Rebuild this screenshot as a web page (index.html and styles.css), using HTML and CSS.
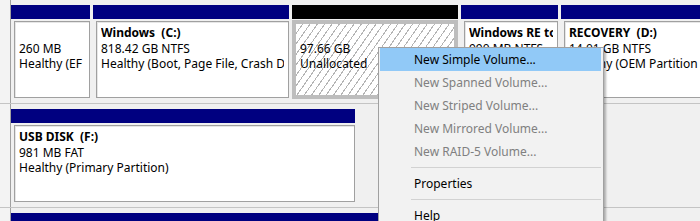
FILE: index.html
```html
<!DOCTYPE html>
<html>
<head>
<meta charset="utf-8">
<link rel="stylesheet" href="styles.css">
</head>
<body>
<div class="view">
  <div class="disk">
    <div class="disk-label"></div>
    <div class="parts">
      <div class="part p-efi">
        <div class="bar"></div>
        <div class="body"><div class="line">&nbsp;</div><div class="line">260 MB</div><div class="line">Healthy (EF</div></div>
      </div>
      <div class="part p-c">
        <div class="bar"></div>
        <div class="body"><div class="line b">Windows  (C:)</div><div class="line">818.42 GB NTFS</div><div class="line">Healthy (Boot, Page File, Crash D</div></div>
      </div>
      <div class="part p-un">
        <div class="bar black"></div>
        <div class="body hatch"><div class="line">&nbsp;</div><div class="line">97.66 GB</div><div class="line">Unallocated</div></div>
      </div>
      <div class="part p-re">
        <div class="bar"></div>
        <div class="body"><div class="line b">Windows RE to</div><div class="line">990 MB NTFS</div><div class="line">&nbsp;</div></div>
      </div>
      <div class="part p-rec">
        <div class="bar"></div>
        <div class="body"><div class="line b">RECOVERY  (D:)</div><div class="line">14.01 GB NTFS</div><div class="line">Healthy (OEM Partition</div></div>
      </div>
    </div>
  </div>
  <div class="disk">
    <div class="disk-label"></div>
    <div class="parts">
      <div class="part p-usb">
        <div class="bar"></div>
        <div class="body"><div class="line b">USB DISK  (F:)</div><div class="line">981 MB FAT</div><div class="line">Healthy (Primary Partition)</div></div>
      </div>
    </div>
  </div>
  <div class="disk last">
    <div class="disk-label"></div>
    <div class="parts">
      <div class="part p-next">
        <div class="bar"></div>
      </div>
    </div>
  </div>
</div>
<div class="menu">
  <div class="item active">New Simple Volume...</div>
  <div class="item dis">New Spanned Volume...</div>
  <div class="item dis">New Striped Volume...</div>
  <div class="item dis">New Mirrored Volume...</div>
  <div class="item dis">New RAID-5 Volume...</div>
  <div class="sep"></div>
  <div class="item">Properties</div>
  <div class="sep"></div>
  <div class="item">Help</div>
</div>
</body>
</html>
```
FILE: styles.css
```css
html, body {
  margin: 0;
  padding: 0;
  background: #f0f0f0;
  overflow: hidden;
}
body {
  font-family: "Segoe UI", "Noto Sans", "Open Sans", sans-serif;
  font-size: 12px;
  color: #000;
  width: 700px;
  height: 221px;
  position: relative;
}
.view {
  display: flex;
  flex-direction: column;
  height: 221px;
  overflow: hidden;
}
.disk {
  display: flex;
  height: 103px;
  border-bottom: 1px solid #c4c4c4;
  flex-shrink: 0;
}
.disk.last {
  height: auto;
  flex: 1;
  min-height: 0;
  border-bottom: none;
}
.disk-label {
  width: 10px;
  border-right: 1px solid #a0a0a0;
  background: #f3f3f3;
  flex-shrink: 0;
}
.parts {
  display: flex;
  gap: 3px;
  padding-top: 5px;
  flex: 1;
  min-width: 0;
  overflow: hidden;
}
.part {
  display: flex;
  flex-direction: column;
  flex-shrink: 0;
}
.p-efi { width: 79px; }
.p-c { width: 196px; }
.p-un { width: 166px; }
.p-re { width: 97px; }
.p-rec { width: 160px; }
.p-usb { width: 344px; }
.p-next { width: 420px; }
.bar {
  height: 14px;
  background: #000080;
  flex-shrink: 0;
}
.bar.black {
  background: #000;
}
.body {
  margin: 2px 0 0 3px;
  height: 77px;
  box-sizing: border-box;
  border: 1px solid #a0a0a0;
  box-shadow: inset 1px 1px 0 #e6e6e6;
  background: #fff;
  padding: 3px 4px 0 4px;
  overflow: hidden;
  white-space: pre;
}
.line {
  line-height: 15.5px;
  overflow: hidden;
}
.b {
  font-weight: bold;
}
.body.hatch {
  margin-left: 0;
  margin-top: 1px;
  height: 79px;
  border: 4px solid #bdbdbd;
  box-shadow: none;
  padding: 1px 5px 0 4px;
  background-color: #fff;
  background-image: repeating-linear-gradient(125deg, #fff 0px, #fff 5px, #b4b4b4 5px, #b4b4b4 6px);
}
.menu {
  position: absolute;
  left: 378px;
  top: 47px;
  width: 226px;
  box-sizing: border-box;
  background: #f2f2f2;
  border: 1px solid #a0a0a0;
  padding: 0 2px 2px 1px;
  box-shadow: 2px 2px 2px rgba(0, 0, 0, 0.28);
}
.item {
  height: 23px;
  line-height: 23px;
  padding-left: 34px;
  white-space: nowrap;
  color: #000;
}
.item.active {
  background: #91c9f7;
}
.item.dis {
  color: #808080;
}
.sep {
  height: 1px;
  background: #d2d2d2;
  margin: 4px 0 4px 31px;
}
```
